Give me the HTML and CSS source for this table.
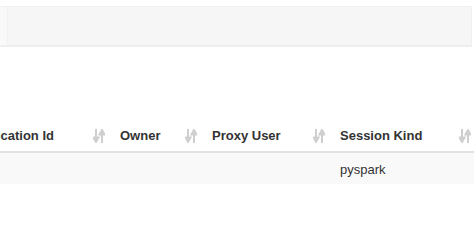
FILE: index.html
```html
<!DOCTYPE html>
<html>
<head>
<meta charset="utf-8">
<link rel="stylesheet" href="styles.css">
</head>
<body>
<div class="page">
  <div class="well"><div class="well-inner"></div></div>
  <div class="table-wrap">
    <table class="sessions">
      <colgroup>
        <col class="c1"><col class="c2"><col class="c3"><col class="c4">
      </colgroup>
      <thead>
        <tr>
          <th><div class="th-in"><span>Application Id</span><svg class="sort" width="12" height="14" viewBox="0 0 12 14"><path d="M3 0v10M0.5 8.5L3 13l2.5-4.5z M9 14V4M6.5 5.5L9 1l2.5 4.5z" stroke="#cfcfcf" stroke-width="2" fill="#cfcfcf"/></svg></div></th>
          <th><div class="th-in"><span>Owner</span><svg class="sort" width="12" height="14" viewBox="0 0 12 14"><path d="M3 0v10M0.5 8.5L3 13l2.5-4.5z M9 14V4M6.5 5.5L9 1l2.5 4.5z" stroke="#cfcfcf" stroke-width="2" fill="#cfcfcf"/></svg></div></th>
          <th><div class="th-in"><span>Proxy User</span><svg class="sort" width="12" height="14" viewBox="0 0 12 14"><path d="M3 0v10M0.5 8.5L3 13l2.5-4.5z M9 14V4M6.5 5.5L9 1l2.5 4.5z" stroke="#cfcfcf" stroke-width="2" fill="#cfcfcf"/></svg></div></th>
          <th><div class="th-in"><span>Session Kind</span><svg class="sort" width="12" height="14" viewBox="0 0 12 14"><path d="M3 0v10M0.5 8.5L3 13l2.5-4.5z M9 14V4M6.5 5.5L9 1l2.5 4.5z" stroke="#cfcfcf" stroke-width="2" fill="#cfcfcf"/></svg></div></th>
        </tr>
      </thead>
      <tbody>
        <tr class="odd">
          <td></td>
          <td></td>
          <td></td>
          <td>pyspark</td>
        </tr>
      </tbody>
    </table>
  </div>
</div>
</body>
</html>
```
FILE: styles.css
```css
html, body {
  margin: 0;
  padding: 0;
  background: #fff;
  overflow: hidden;
}
body {
  font-family: "Liberation Sans", Arial, sans-serif;
  font-size: 13px;
  color: #333;
}
.page {
  width: 474px;
  height: 248px;
  overflow: hidden;
  padding-top: 6px;
  box-sizing: border-box;
}
.well {
  width: 472px;
  height: 41px;
  box-sizing: border-box;
  border-top: 1px solid #f0f0f0;
  border-bottom: 2px solid #eeeeee;
  border-left: 1px solid #fafafa;
  background: #f9f9f9;
  display: flex;
}
.well-inner {
  flex: 1;
  margin-left: 6px;
  background: #f6f6f6;
  border-left: 1px solid #f2f2f2;
  border-right: 1px solid #efefef;
}
.table-wrap {
  margin-top: 72px;
  margin-left: -40px;
}
.sessions {
  border-collapse: collapse;
  table-layout: fixed;
  width: 518px;
}
.c1 { width: 152px; }
.c2 { width: 92px; }
.c3 { width: 128px; }
.c4 { width: 146px; }
.sessions th {
  text-align: left;
  font-weight: bold;
  padding: 7px 7px 5px 8px;
  line-height: 20px;
  border-bottom: 2px solid #e2e2e2;
  white-space: nowrap;
}
.th-in {
  display: flex;
  align-items: center;
  justify-content: space-between;
}
.sort {
  display: block;
  flex: none;
}
.sessions td {
  padding: 7px 8px 4px 8px;
  line-height: 20px;
  height: 20px;
}
.sessions tr.odd td {
  background: #f9f9f9;
}
```
